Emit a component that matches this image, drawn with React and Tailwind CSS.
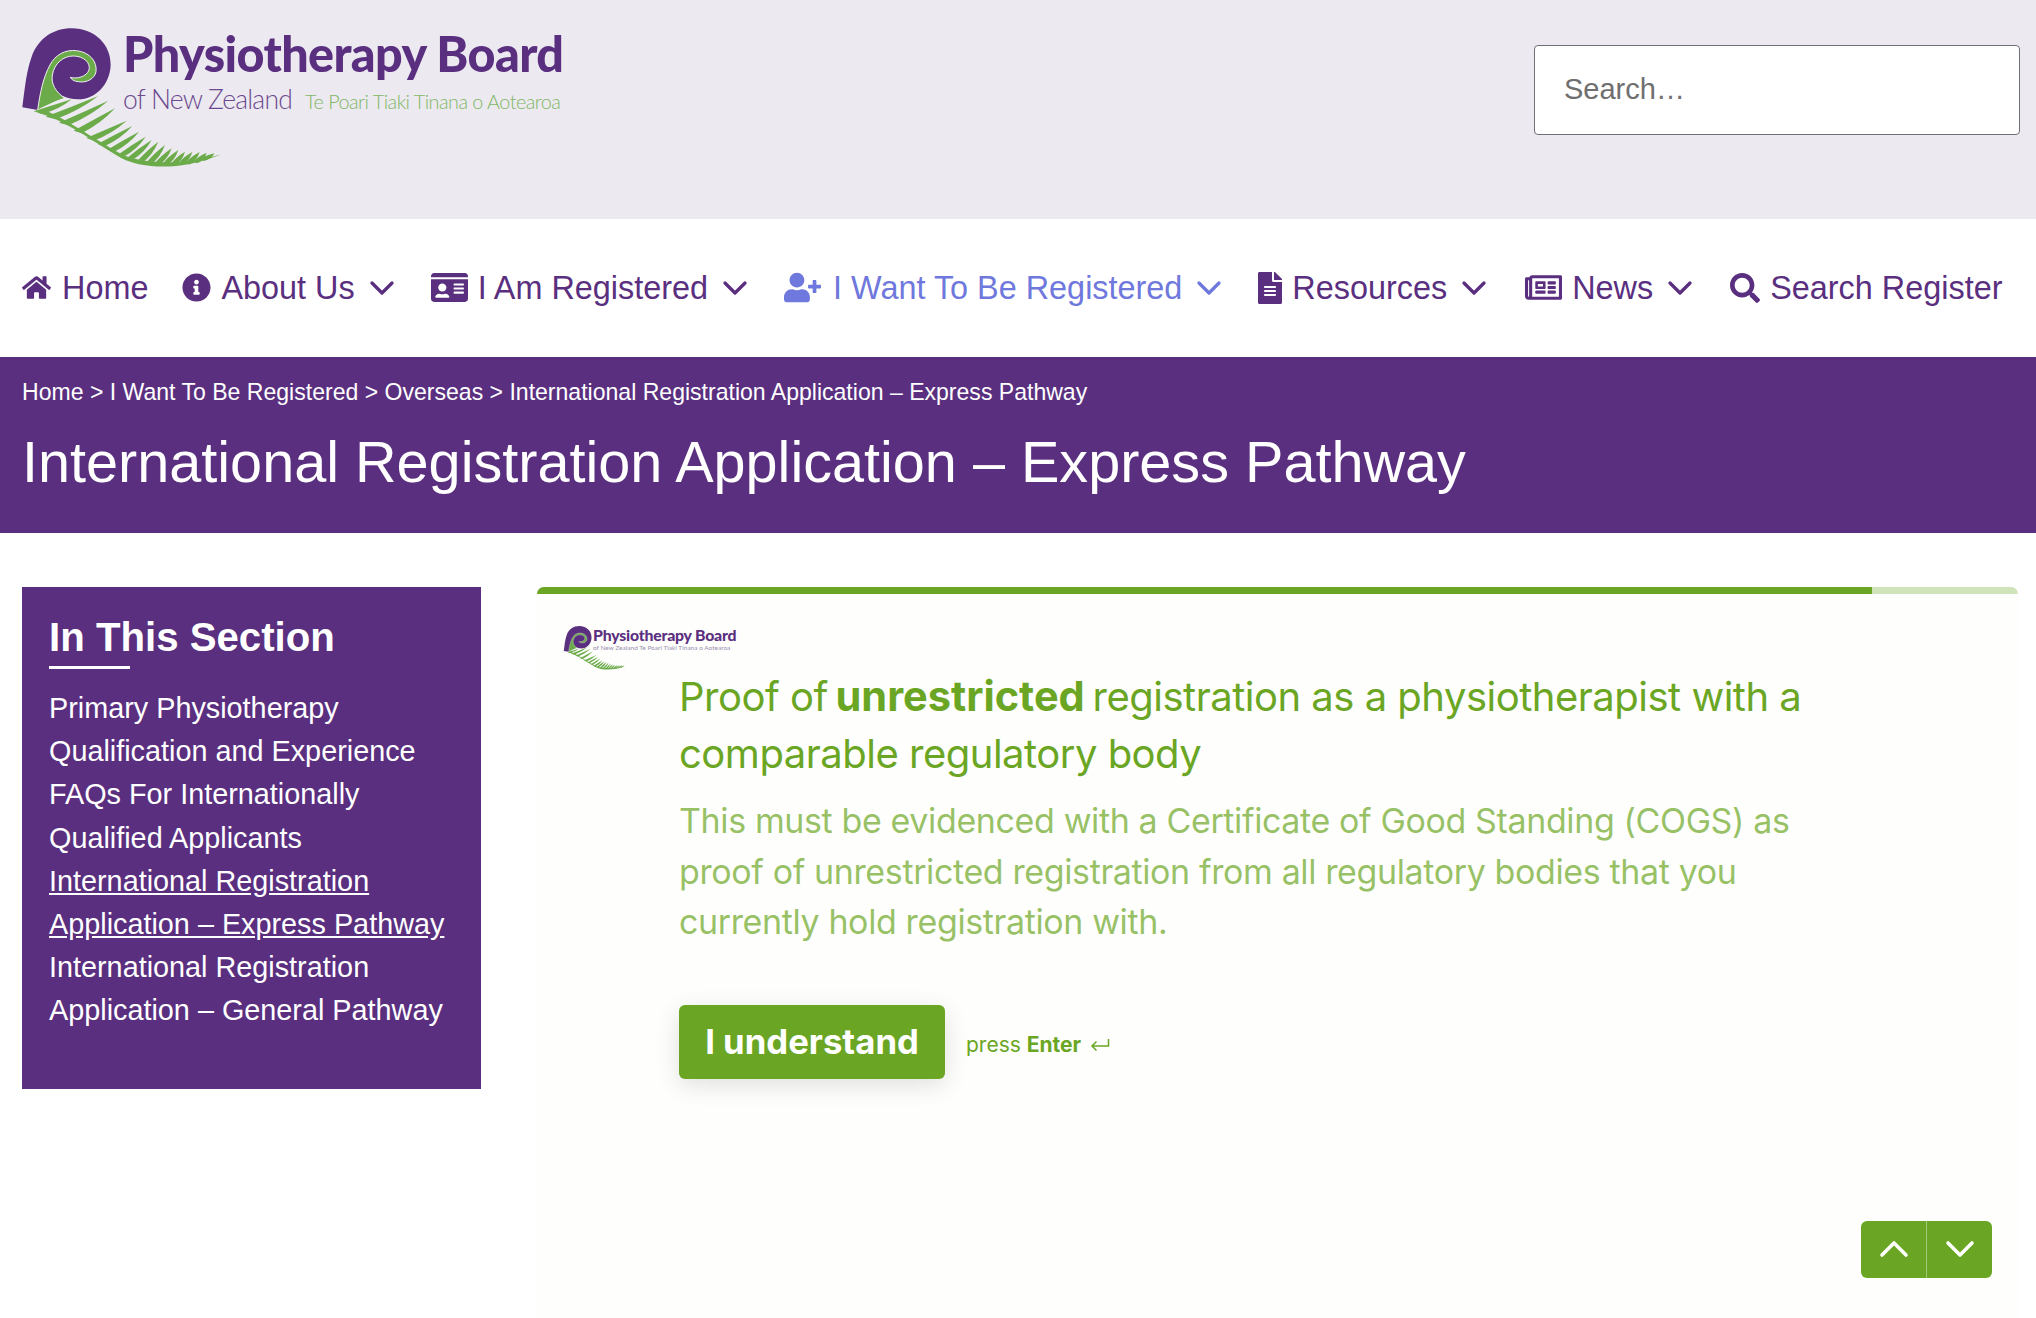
import { FaHome, FaInfoCircle, FaIdCard, FaUserPlus, FaFileAlt, FaRegNewspaper, FaSearch } from "react-icons/fa";
import { ChevronDown, ChevronUp } from "lucide-react";

// [base x, base y, tip x, tip y, base width], in the fern crop's coordinates
const fronds = [
  [82, 72, 170, 28, 26],
  [122, 88, 250, 18, 30],
  [160, 106, 280, 32, 28],
  [200, 130, 300, 55, 24],
  [236, 152, 335, 92, 22],
  [266, 170, 352, 108, 18],
  [296, 186, 372, 125, 16],
  [326, 200, 392, 140, 14],
  [352, 210, 410, 150, 13],
  [380, 220, 430, 155, 12],
  [406, 225, 450, 165, 11],
  [430, 227, 470, 175, 10],
  [454, 227, 490, 180, 9],
  [478, 227, 510, 185, 8],
  [500, 226, 532, 186, 8],
  [522, 224, 554, 186, 7],
  [545, 220, 575, 188, 6],
  [565, 213, 598, 190, 5],
];

const LogoMark = ({ className }) => (
  <svg viewBox="20 28 200 140" className={className}>
    <g transform="translate(15 20) scale(0.3333)">
      <path d="M22 262 C30 200 35 150 50 110 C70 55 115 25 170 25 C240 25 288 75 287 135 C285 195 240 238 190 238 C170 238 150 232 130 222 L68 270 Z" fill="#5a2f7f" />
      <path d="M68 270 C75 220 85 170 105 135 C120 105 150 88 185 92 C225 97 247 125 243 155 C240 175 215 190 190 185 C178 184 170 180 166 172 C185 178 215 170 222 150 C228 128 205 108 175 108 C145 108 118 130 112 165 C108 190 120 215 150 235 C130 240 100 255 68 270 Z" fill="#6cab4a" stroke="#f1eff4" strokeWidth="3" />
    </g>
    <g transform="translate(15 90) scale(0.3333)">
      <path d="M68 68 C150 90 225 148 320 205 C390 240 510 240 620 192 C510 228 395 222 325 196 C240 150 160 90 84 58 Z" fill="#6cab4a" />
      {fronds.map(([x, y, tx, ty, w]) => {
        const mx = (x + tx) / 2;
        const my = (y + ty) / 2;
        return (
          <path
            key={tx}
            d={`M${x} ${y} Q${mx + 8} ${my + 8} ${tx} ${ty} Q${mx - 12} ${my - 4} ${x - w} ${y - 8} Z`}
            fill="#6cab4a"
          />
        );
      })}
    </g>
  </svg>
);

const NavItem = ({ icon: Icon, size, iconClass, label, caret, active, className = "" }) => (
  <a className={`flex items-center gap-[10px] ${active ? "text-[#6f78dc]" : "text-[#5a2f7f]"} ${className}`}>
    <Icon size={size} className={iconClass} />
    <span>{label}</span>
    {caret && <ChevronDown className="ml-[-3px] mr-[-10px] h-[40px] w-[40px]" strokeWidth={2} />}
  </a>
);

const sideLinks = [
  { text: "Primary Physiotherapy Qualification and Experience" },
  { text: "FAQs For Internationally Qualified Applicants" },
  { text: "International Registration Application – Express Pathway", current: true },
  { text: "International Registration Application – General Pathway" },
];

export default function App() {
  return (
    <div className="min-h-[1318px] bg-white font-['Liberation_Sans',sans-serif]">
      <header className="flex h-[219px] items-start justify-between bg-[#ece9f0] pl-[22px] pr-[16px]">
        <div className="flex pt-[28px]">
          <LogoMark className="ml-[-2px] mr-[-97px] h-[140px] w-[200px] shrink-0" />
          <div className="mt-[-3px] font-['Lato',sans-serif]">
            <div className="text-[48.5px] font-black leading-[56px] tracking-[-0.6px] text-[#5a2f7f]">Physiotherapy Board</div>
            <div className="flex items-baseline gap-[13px]">
              <span className="text-[26.5px] font-light leading-[37px] tracking-[-0.8px] text-[#6b4a8f]">of New Zealand</span>
              <span className="text-[19.8px] font-light tracking-[-0.5px] text-[#7fb865]">Te Poari Tiaki Tinana o Aotearoa</span>
            </div>
          </div>
        </div>
        <div className="mt-[45px] flex h-[90px] w-[486px] items-center rounded-[4px] border border-[#6f6f76] bg-white px-[29px] text-[29px] text-[#6f6f6f]">
          Search…
        </div>
      </header>

      <nav className="flex h-[138px] items-center gap-[39px] pl-[22px] text-[32.4px]">
        <NavItem icon={FaHome} size={29} label="Home" className="mr-[-5px] gap-[11px]" />
        <NavItem icon={FaInfoCircle} size={29} label="About Us" caret />
        <NavItem icon={FaIdCard} size={37} label="I Am Registered" caret />
        <NavItem icon={FaUserPlus} size={37} iconClass="mr-[2px]" label="I Want To Be Registered" caret active />
        <NavItem icon={FaFileAlt} size={32} iconClass="-mx-[4px]" label="Resources" caret />
        <NavItem icon={FaRegNewspaper} size={37} label="News" caret className="ml-[2px]" />
        <NavItem icon={FaSearch} size={30} label="Search Register" className="ml-[1px]" />
      </nav>

      <section className="h-[176px] bg-[#5a2f7f] px-[22px] pt-[20px] text-white">
        <div className="text-[23.05px] leading-[30px]">Home &gt; I Want To Be Registered &gt; Overseas &gt; International Registration Application – Express Pathway</div>
        <h1 className="mt-[19px] text-[57.6px] leading-[72px]">International Registration Application – Express Pathway</h1>
      </section>

      <main className="flex items-start gap-[56px] pl-[22px] pr-[18px] pt-[54px]">
        <aside className="h-[502px] w-[459px] shrink-0 bg-[#5a2f7f] px-[27px] pt-[28px] text-white">
          <h2 className="text-[40.2px] font-bold leading-[46px]">In This Section</h2>
          <div className="mt-[5px] h-[3px] w-[81px] bg-white" />
          <ul className="mt-[18px] text-[28.8px] leading-[43.2px]">
            {sideLinks.map((l) => (
              <li key={l.text} className={l.current ? "underline" : ""}>{l.text}</li>
            ))}
          </ul>
        </aside>

        <div className="min-h-[731px] flex-1 rounded-t-[16px] bg-[#fefefc] font-['Inter',sans-serif]">
          <div className="flex h-[7px] overflow-hidden rounded-t-[16px] bg-[#d0e4bb]">
            <div className="w-[1335px] bg-[#6aa623]" />
          </div>
          <div className="flex h-[74px] items-start pl-[26px] pt-[32px]">
            <LogoMark className="mr-[-33px] h-[44px] w-[63px] shrink-0" />
            <div className="font-['Lato',sans-serif]">
              <div className="text-[15.8px] font-black leading-[18px] tracking-[-0.2px] text-[#5a2f7f]">Physiotherapy Board</div>
              <div className="text-[6.5px] leading-[8px] text-[#9a8fb0]">of New Zealand Te Poari Tiaki Tinana o Aotearoa</div>
            </div>
          </div>
          <div className="ml-[142px] w-[1180px]">
            <h3 className="text-[40px] leading-[57px] tracking-[-0.5px] text-[#6aa623]">
              Proof of <strong className="ml-[-3px] mr-[-3px] text-[41.5px] font-bold tracking-normal">unrestricted</strong> registration as a physiotherapist with a comparable regulatory body
            </h3>
            <p className="mt-[14px] text-[34px] leading-[50.5px] tracking-[-0.38px] text-[#6aa623]/70">
              This must be evidenced with a Certificate of Good Standing (COGS) as proof of unrestricted registration from all regulatory bodies that you currently hold registration with.
            </p>
            <div className="mt-[57px] flex items-center gap-[21px]">
              <button className="flex h-[74px] w-[266px] items-center justify-center rounded-[6px] bg-[#6aa623] text-[34.7px] font-bold text-white shadow-[0_6px_24px_rgba(0,0,0,0.12)]">
                I understand
              </button>
              <div className="mt-[7px] flex items-center gap-[9px] text-[21px] text-[#6aa623]">
                <span>press <strong className="font-bold">Enter</strong></span>
                <svg viewBox="0 0 20 14" className="h-[14px] w-[20px]" fill="none" stroke="currentColor" strokeWidth="1.5">
                  <path d="M18.5 1v7H2M6.5 3.5 2 8l4.5 4.5" />
                </svg>
              </div>
            </div>
          </div>
          <div className="mt-[142px] flex justify-end pr-[26px]">
            <div className="flex h-[57px] w-[131px] overflow-hidden rounded-[6px] bg-[#6aa623] text-white">
              <div className="flex flex-1 items-center justify-center border-r border-white/40">
                <ChevronUp className="h-[48px] w-[48px]" strokeWidth={1.8} />
              </div>
              <div className="flex flex-1 items-center justify-center">
                <ChevronDown className="h-[48px] w-[48px]" strokeWidth={1.8} />
              </div>
            </div>
          </div>
        </div>
      </main>
    </div>
  );
}
